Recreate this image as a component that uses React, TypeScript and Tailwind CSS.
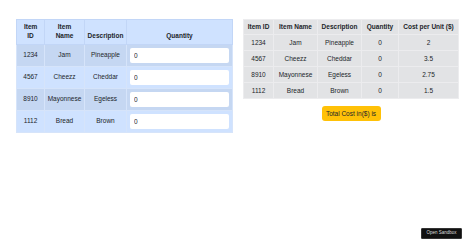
const items = [
  { id: "1234", name: "Jam", desc: "Pineapple", qty: 0, cost: "2" },
  { id: "4567", name: "Cheezz", desc: "Cheddar", qty: 0, cost: "3.5" },
  { id: "8910", name: "Mayonnese", desc: "Egeless", qty: 0, cost: "2.75" },
  { id: "1112", name: "Bread", desc: "Brown", qty: 0, cost: "1.5" },
];

const App = () => {
  return (
    <div className="w-[474px] h-[248px] bg-white relative font-['Liberation_Sans',Arial,sans-serif] text-[#212529]">
      <div className="flex items-start gap-[10px] pt-[19px] pl-[16px]">
        <table className="w-[216px] border-collapse text-[6.5px] text-center table-fixed">
          <colgroup>
            <col className="w-[28px]" />
            <col className="w-[40px]" />
            <col className="w-[42px]" />
            <col className="w-[106px]" />
          </colgroup>
          <thead>
            <tr className="h-[25px] bg-[#cfe2ff]">
              <th className="border border-[#c2d6f7] font-bold align-bottom pb-[4px] leading-[9px] px-[7px]">Item ID</th>
              <th className="border border-[#c2d6f7] font-bold align-bottom pb-[4px] leading-[9px] px-[5px]">Item Name</th>
              <th className="border border-[#c2d6f7] font-bold align-bottom pb-[4px] leading-[9px]">Description</th>
              <th className="border border-[#c2d6f7] font-bold align-bottom pb-[4px] leading-[9px]">Quantity</th>
            </tr>
          </thead>
          <tbody>
            {items.map((item, i) => (
              <tr key={item.id} className={i % 2 === 0 ? "h-[22px] bg-[#c5d7f2]" : "h-[22px] bg-[#cfe2ff]"}>
                <td className="border border-[#d6e4fa] align-top pt-[5px]">{item.id}</td>
                <td className="border border-[#d6e4fa] align-top pt-[5px]">{item.name}</td>
                <td className="border border-[#d6e4fa] align-top pt-[5px]">{item.desc}</td>
                <td className="border border-[#d6e4fa] px-[3px] py-0 align-middle">
                  <input
                    readOnly
                    value={item.qty}
                    className="w-full h-[15px] bg-white rounded-[2px] text-[6.5px] px-[4px] outline-none"
                  />
                </td>
              </tr>
            ))}
          </tbody>
        </table>

        <div className="flex flex-col items-center">
          <table className="w-[215px] border-collapse text-[6.5px] text-center table-fixed bg-[#e2e3e5]">
            <colgroup>
              <col className="w-[30px]" />
              <col className="w-[44px]" />
              <col className="w-[44px]" />
              <col className="w-[37px]" />
              <col className="w-[60px]" />
            </colgroup>
            <thead>
              <tr className="h-[15px]">
                <th className="border border-[#ececee] font-bold">Item ID</th>
                <th className="border border-[#ececee] font-bold">Item Name</th>
                <th className="border border-[#ececee] font-bold">Description</th>
                <th className="border border-[#ececee] font-bold">Quantity</th>
                <th className="border border-[#ececee] font-bold">Cost per Unit ($)</th>
              </tr>
            </thead>
            <tbody>
              {items.map((item) => (
                <tr key={item.id} className="h-[16px]">
                  <td className="border border-[#ececee]">{item.id}</td>
                  <td className="border border-[#ececee]">{item.name}</td>
                  <td className="border border-[#ececee]">{item.desc}</td>
                  <td className="border border-[#ececee]">{item.qty}</td>
                  <td className="border border-[#ececee]">{item.cost}</td>
                </tr>
              ))}
            </tbody>
          </table>
          <button className="mt-[7px] h-[15px] w-[59px] bg-[#ffc107] rounded-[3px] text-[6.5px] text-[#212529]">
            Total Cost in($) is
          </button>
        </div>
      </div>

      <button className="absolute right-[12px] bottom-[9px] w-[41px] h-[11px] bg-[#111] text-[#ddd] text-[4.5px] rounded-[1px] border border-[#333]">
        Open Sandbox
      </button>
    </div>
  );
};

export default App;
